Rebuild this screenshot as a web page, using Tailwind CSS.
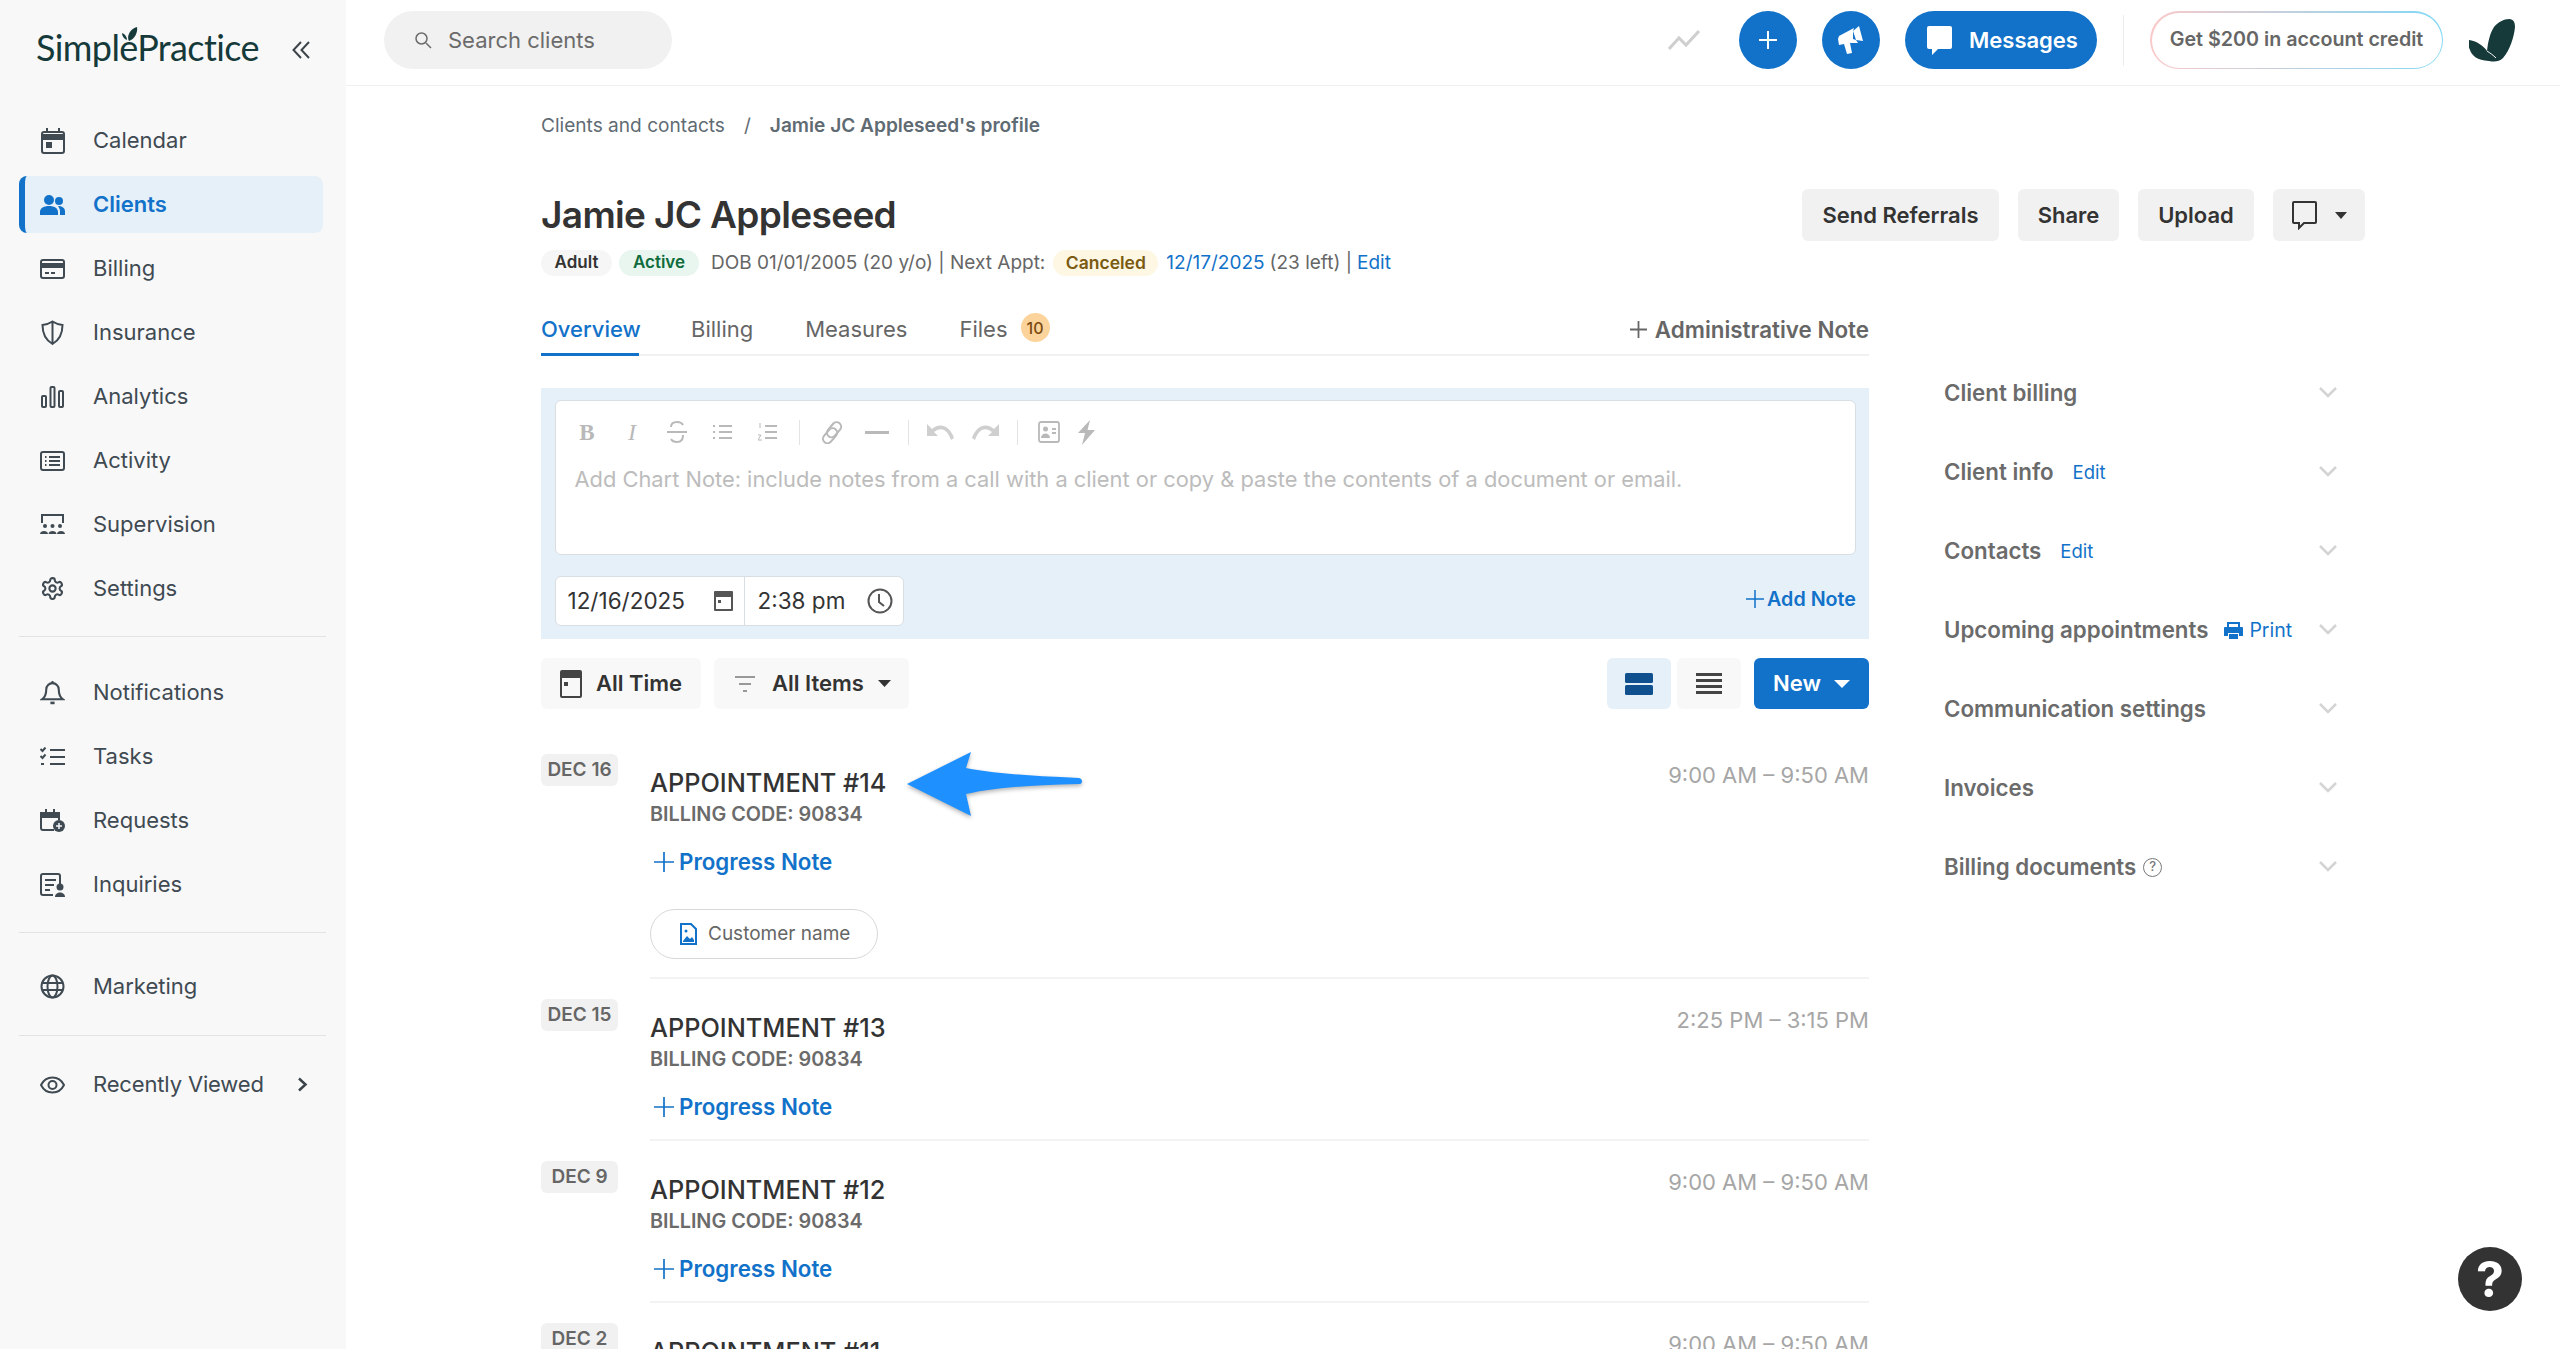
<!DOCTYPE html>
<html lang="en">
<head>
    <meta charset="UTF-8">
    <title>Jamie JC Appleseed's profile</title>
    <script src="https://cdn.jsdelivr.net/npm/@tailwindcss/browser@4"></script>
</head>
<body class="relative h-[1349px] w-[2560px] overflow-hidden bg-white font-['Inter',sans-serif] text-[#333]">
<div class="flex h-full">
    <!-- sidebar -->
    <aside class="w-[346px] shrink-0 bg-[#f8f8f8] text-[22px] text-[#3f4a52]">
        <div class="flex h-[112px] items-start pl-[36px] pt-[24px]">
            <div class="relative w-[222px] whitespace-nowrap font-['Lato',sans-serif] text-[36px] leading-[46px] tracking-[-0.6px] text-[#163a3a]">SimplePractice
                <svg class="absolute left-[85px] top-[3px]" width="17" height="14" viewBox="0 0 17 14"><path d="M8 14C5 9 10 1 16 0c1 5-2 12-8 14zM6 13C3 12 1 9 1 6c3 1 5 4 5 7z" fill="#163a3a"/></svg>
            </div>
            <svg class="ml-[34px] mt-[17px]" width="18" height="18" viewBox="0 0 18 18" fill="none" stroke="#3d4449" stroke-width="2"><path d="M9 1 1.500 9 9 17M17 1 9.500 9 17 17"/></svg>
        </div>
        <nav class="ml-[19px] w-[307px]">
            <a class="mb-[7px] flex h-[57px] w-[304px] items-center gap-[28px] rounded-lg border-l-[6px] border-transparent pl-[15px]">
                <svg width="25" height="26" viewBox="0 0 25 26" fill="none" stroke="#3f4a52" stroke-width="2"><rect x="2" y="4" width="22" height="21" rx="2"/><path d="M2 7h22v4H2z" fill="#3f4a52"/><path d="M7 0v5M19 0v5"/><rect x="6" y="14" width="6" height="6" fill="#3f4a52" stroke="none"/></svg>
                <span>Calendar</span>
            </a>
            <a class="mb-[7px] flex h-[57px] w-[304px] items-center gap-[28px] rounded-lg border-l-[6px] border-[#1272c9] bg-[#e6f0f9] pl-[15px] font-semibold text-[#1272c9]">
                <svg width="25" height="22" viewBox="0 0 25 22" fill="#1272c9"><circle cx="9" cy="6" r="5"/><circle cx="19" cy="7" r="4"/><path d="M0 21v-3c0-4 4-6 9-6s9 2 9 6v3zM20 21v-4c0-2-1-3-2-5 4 0 7 2 7 5v4z"/></svg>
                <span>Clients</span>
            </a>
            <a class="mb-[7px] flex h-[57px] w-[304px] items-center gap-[28px] rounded-lg border-l-[6px] border-transparent pl-[15px]">
                <svg width="25" height="20" viewBox="0 0 25 20" fill="none" stroke="#3f4a52" stroke-width="2"><rect x="1" y="1" width="23" height="18" rx="2"/><path d="M1 5h23v3H1z" fill="#3f4a52"/><path d="M5 14h4M11 14h4"/></svg>
                <span>Billing</span>
            </a>
            <a class="mb-[7px] flex h-[57px] w-[304px] items-center gap-[28px] rounded-lg border-l-[6px] border-transparent pl-[15px]">
                <svg width="25" height="25" viewBox="0 0 25 25" fill="none" stroke="#3f4a52" stroke-width="2"><path d="M12.500 1.500c3 2 6 3 10 3.500 0 9-3 15-10 19C5.500 20 2.500 14 2.500 5c4-.5 7-1.500 10-3.500zM12.500 1.500V24"/></svg>
                <span>Insurance</span>
            </a>
            <a class="mb-[7px] flex h-[57px] w-[304px] items-center gap-[28px] rounded-lg border-l-[6px] border-transparent pl-[15px]">
                <svg width="25" height="24" viewBox="0 0 25 24" fill="none" stroke="#3f4a52" stroke-width="2"><rect x="2" y="11" width="4" height="11" rx="1"/><rect x="10.500" y="2" width="4" height="20" rx="1"/><rect x="19" y="6" width="4" height="16" rx="1"/></svg>
                <span>Analytics</span>
            </a>
            <a class="mb-[7px] flex h-[57px] w-[304px] items-center gap-[28px] rounded-lg border-l-[6px] border-transparent pl-[15px]">
                <svg width="25" height="20" viewBox="0 0 25 20" fill="none" stroke="#3f4a52" stroke-width="2"><rect x="1" y="1" width="23" height="18" rx="2"/><path d="M9 6h11M9 10h11M9 14h11M5 6h1.500M5 10h1.500M5 14h1.500"/></svg>
                <span>Activity</span>
            </a>
            <a class="mb-[7px] flex h-[57px] w-[304px] items-center gap-[28px] rounded-lg border-l-[6px] border-transparent pl-[15px]">
                <svg width="25" height="21" viewBox="0 0 25 21" fill="none" stroke="#3f4a52" stroke-width="2"><path d="M2 9V1h21v8"/><g fill="#3f4a52" stroke="none"><circle cx="5" cy="12" r="2"/><circle cx="12.500" cy="12" r="2"/><circle cx="20" cy="12" r="2"/><path d="M0 20c0-4 8-4 8 0zM8.500 20c0-4 8-4 8 0zM17 20c0-4 8-4 8 0z"/></g></svg>
                <span>Supervision</span>
            </a>
            <a class="flex h-[57px] w-[304px] items-center gap-[28px] rounded-lg border-l-[6px] border-transparent pl-[15px]">
                <svg width="25" height="25" viewBox="0 0 24 24" fill="none" stroke="#3f4a52" stroke-width="2"><path d="M12.220 2h-.44a2 2 0 0 0-2 2v.18a2 2 0 0 1-1 1.730l-.43.25a2 2 0 0 1-2 0l-.15-.08a2 2 0 0 0-2.730.73l-.22.38a2 2 0 0 0 .73 2.730l.15.1a2 2 0 0 1 1 1.720v.51a2 2 0 0 1-1 1.740l-.15.09a2 2 0 0 0-.73 2.730l.22.38a2 2 0 0 0 2.730.73l.15-.08a2 2 0 0 1 2 0l.43.25a2 2 0 0 1 1 1.730V20a2 2 0 0 0 2 2h.44a2 2 0 0 0 2-2v-.18a2 2 0 0 1 1-1.730l.43-.25a2 2 0 0 1 2 0l.15.08a2 2 0 0 0 2.730-.73l.22-.39a2 2 0 0 0-.73-2.730l-.15-.08a2 2 0 0 1-1-1.740v-.5a2 2 0 0 1 1-1.740l.15-.09a2 2 0 0 0 .73-2.730l-.22-.38a2 2 0 0 0-2.730-.73l-.15.08a2 2 0 0 1-2 0l-.43-.25a2 2 0 0 1-1-1.730V4a2 2 0 0 0-2-2z"/><circle cx="12" cy="12" r="3"/></svg>
                <span>Settings</span>
            </a>
            <div class="mb-[27px] mt-[19px] h-px bg-[#e2e2e2]"></div>
            <a class="mb-[7px] flex h-[57px] w-[304px] items-center gap-[28px] rounded-lg border-l-[6px] border-transparent pl-[15px]">
                <svg width="25" height="25" viewBox="0 0 24 24" fill="none" stroke="#3f4a52" stroke-width="2"><path d="M6 9a6 6 0 0 1 12 0c0 6 2 8 4 9.500H2C4 17 6 15 6 9z"/><path d="M10 22h4" stroke-width="2.500"/><path d="M12 1v2"/></svg>
                <span>Notifications</span>
            </a>
            <a class="mb-[7px] flex h-[57px] w-[304px] items-center gap-[28px] rounded-lg border-l-[6px] border-transparent pl-[15px]">
                <svg width="25" height="20" viewBox="0 0 25 20" fill="none" stroke="#3f4a52" stroke-width="2"><path d="M10 3h15M10 10h15M10 17h15M0.500 2l2 2 3-3.500M0.500 9l2 2 3-3.500M1 17h3"/></svg>
                <span>Tasks</span>
            </a>
            <a class="mb-[7px] flex h-[57px] w-[304px] items-center gap-[28px] rounded-lg border-l-[6px] border-transparent pl-[15px]">
                <svg width="25" height="24" viewBox="0 0 25 24" fill="none" stroke="#3f4a52" stroke-width="2"><path d="M14 21H3a2 2 0 0 1-2-2V6h18v5"/><path d="M1 4h18v4H1z" fill="#3f4a52"/><path d="M6 0v4M14 0v4"/><circle cx="19" cy="17" r="6" fill="#3f4a52" stroke="none"/><path d="M19 14v6M16 17h6" stroke="#f8f8f8" stroke-width="1.500"/></svg>
                <span>Requests</span>
            </a>
            <a class="flex h-[57px] w-[304px] items-center gap-[28px] rounded-lg border-l-[6px] border-transparent pl-[15px]">
                <svg width="25" height="24" viewBox="0 0 25 24" fill="none" stroke="#3f4a52" stroke-width="2"><path d="M13 22H3a2 2 0 0 1-2-2V3a2 2 0 0 1 2-2h15a2 2 0 0 1 2 2v8"/><path d="M5 7h11M5 12h9M5 17h5"/><g fill="#3f4a52" stroke="none"><circle cx="20" cy="14" r="3.500"/><path d="M15 24c0-6 10-6 10 0z"/></g></svg>
                <span>Inquiries</span>
            </a>
            <div class="mb-[25px] mt-[19px] h-px bg-[#e2e2e2]"></div>
            <a class="flex h-[57px] w-[304px] items-center gap-[28px] rounded-lg border-l-[6px] border-transparent pl-[15px]">
                <svg width="25" height="25" viewBox="0 0 25 25" fill="none" stroke="#3f4a52" stroke-width="2"><circle cx="12.500" cy="12.500" r="11"/><ellipse cx="12.500" cy="12.500" rx="5" ry="11"/><path d="M2 9h21M2 16h21"/></svg>
                <span>Marketing</span>
            </a>
            <div class="mb-[20px] mt-[20px] h-px bg-[#e2e2e2]"></div>
            <a class="flex h-[57px] w-[304px] items-center gap-[28px] rounded-lg border-l-[6px] border-transparent pl-[15px]">
                <svg width="25" height="18" viewBox="0 0 25 18" fill="none" stroke="#3f4a52" stroke-width="2"><path d="M1 9c5-10 18-10 23 0-5 10-18 10-23 0z"/><circle cx="12.500" cy="9" r="4"/></svg>
                <span class="tracking-[-0.15px]">Recently Viewed</span>
                <svg class="ml-[5px]" width="11" height="15" viewBox="0 0 11 15" fill="none" stroke="#3d4449" stroke-width="2.500"><path d="M2 1.500 8.500 7.500 2 13.500"/></svg>
            </a>
        </nav>
    </aside>

    <main class="min-w-0 flex-1">
        <!-- top bar -->
        <header class="flex h-[86px] items-center border-b border-[#f0f0f0] pb-[5px] pl-[38px] pr-[45px]">
            <div class="flex h-[58px] w-[288px] items-center gap-[16px] rounded-full bg-[#f1f1f1] pl-[30px] text-[22px] text-[#6b6b6b]">
                <svg width="18" height="18" viewBox="0 0 18 18" fill="none" stroke="#6b6b6b" stroke-width="1.500"><circle cx="7.500" cy="7.500" r="5.500"/><path d="m12 12 5 5"/></svg>
                <span>Search clients</span>
            </div>
            <svg class="ml-auto mr-[39px]" width="32" height="21" viewBox="0 0 32 21" fill="none" stroke="#cfcfcf" stroke-width="3"><path d="M1 19 11 8l7 7L31 1"/></svg>
            <div class="flex h-[58px] w-[58px] items-center justify-center rounded-full bg-[#1272c9]">
                <svg width="20" height="20" viewBox="0 0 20 20" stroke="#fff" stroke-width="2"><path d="M10 1v18M1 10h18"/></svg>
            </div>
            <div class="ml-[25px] flex h-[58px] w-[58px] items-center justify-center rounded-full bg-[#1272c9]">
                <svg width="28" height="30" viewBox="0 0 28 30" fill="#fff"><path d="M2 11 17 3l-1 3 6-5 4 15-7-1 2 3-8 0 2 10-5 1-3-10-5 1-1-6z"/><path d="M16 6l3 9-3-1z" fill="#1272c9"/></svg>
            </div>
            <div class="ml-[25px] flex h-[58px] w-[192px] items-center gap-[16px] rounded-full bg-[#1272c9] pl-[21px] text-[22px] font-semibold text-white">
                <svg width="27" height="30" viewBox="0 0 27 30" fill="#fff"><path d="M3 1h21a2 2 0 0 1 2 2v19a2 2 0 0 1-2 2H12l-6 6v-6H3a2 2 0 0 1-2-2V3a2 2 0 0 1 2-2z"/></svg>
                <span>Messages</span>
            </div>
            <div class="ml-[26px] mr-[26px] h-[51px] w-px bg-[#ececec]"></div>
            <div class="h-[58px] w-[293px] rounded-full bg-[linear-gradient(90deg,#fbc9c9,#80d8f5)] p-[1.5px]">
                <div class="flex h-full items-center justify-center rounded-full bg-white text-[19.700px] font-semibold text-[#666]">Get $200 in account credit</div>
            </div>
            <svg class="ml-[26px]" width="46" height="43" viewBox="0 0 46 43"><path d="M0 21c7 1 14 5 18 11 1-9 3-18 7-24 4-5 10-8 15-8 5 0 6 4 6 8-1 10-5 23-12 31-4 4-9 4-14 3C8 41 3 37 1 31-1 27-1 24 0 21z" fill="#163a3a"/><path d="M18 32c3 2 6 4 9 7" stroke="#fff" stroke-width="1" fill="none"/></svg>
        </header>

        <div class="pl-[195px] pr-[195px]">
            <div class="flex h-[78px] items-center text-[19.100px] text-[#5f6b73]">
                <span>Clients and contacts</span>
                <span class="mx-[19px]">/</span>
                <span class="font-semibold">Jamie JC Appleseed's profile</span>
            </div>
            <div class="mt-[25px] flex h-[52px] items-center justify-between">
                <h1 class="text-[37px] font-semibold tracking-[-0.65px] text-[#333]">Jamie JC Appleseed</h1>
                <div class="flex gap-[19px] text-[22px] font-semibold text-[#333]">
                    <button class="h-[52px] w-[197px] rounded-md bg-[#f1f1f1]">Send Referrals</button>
                    <button class="h-[52px] w-[101px] rounded-md bg-[#f1f1f1]">Share</button>
                    <button class="h-[52px] w-[116px] rounded-md bg-[#f1f1f1]">Upload</button>
                    <button class="flex h-[52px] w-[92px] items-center justify-center gap-[17px] rounded-md bg-[#f1f1f1]">
                        <svg width="27" height="30" viewBox="0 0 27 30" fill="none" stroke="#333" stroke-width="2"><path d="M3 2h21a1 1 0 0 1 1 1v19a1 1 0 0 1-1 1H13l-5 5v-5H3a1 1 0 0 1-1-1V3a1 1 0 0 1 1-1z"/></svg>
                        <svg width="12" height="7" viewBox="0 0 12 7" fill="#333"><path d="M0 0h12L6 7z"/></svg>
                    </button>
                </div>
            </div>
            <div class="mt-[9px] flex h-[26px] items-center text-[19px] whitespace-nowrap text-[#666]">
                <span class="flex h-[26px] w-[71px] items-center justify-center rounded-full bg-[#f6f6f6] text-[17px] font-semibold text-[#333]">Adult</span>
                <span class="ml-[7px] flex h-[26px] w-[80px] items-center justify-center rounded-full bg-[#e8f6ef] text-[17px] font-semibold text-[#0f6b3c]">Active</span>
                <span class="ml-[12px]">DOB 01/01/2005 (20 y/o) | Next Appt:</span>
                <span class="ml-[8px] flex h-[26px] w-[105px] items-center justify-center rounded-full bg-[#fdf7e3] text-[17.500px] font-semibold text-[#7a5a10]">Canceled</span>
                <span class="ml-[8px] text-[#1272c9]">12/17/2025</span>
                <span class="ml-[5px]">(23 left) |</span>
                <span class="ml-[5px] text-[#1272c9]">Edit</span>
            </div>

            <div class="flex">
                <!-- left column -->
                <div class="w-[1328px] shrink-0">
                    <div class="mt-[37px] flex h-[43px] items-start justify-between border-b-2 border-[#f1f1f1] text-[22px] text-[#666]">
                        <div class="flex">
                            <span class="h-[43px] w-[98px] border-b-[3px] border-[#1272c9] font-medium text-[#1272c9]">Overview</span>
                            <span class="ml-[52px]">Billing</span>
                            <span class="ml-[52px]">Measures</span>
                            <span class="ml-[52px]">Files</span>
                            <span class="ml-[13px] flex h-[29px] w-[29px] items-center justify-center rounded-full bg-[#fcd49b] text-[16px] font-medium text-[#7a4a10]">10</span>
                        </div>
                        <div class="flex items-center gap-[7px] text-[22.400px] font-semibold">
                            <svg width="19" height="19" viewBox="0 0 19 19" stroke="#666" stroke-width="1.800"><path d="M9.500 1v17M1 9.500h17"/></svg>
                            <span>Administrative Note</span>
                        </div>
                    </div>

                    <!-- chart note box -->
                    <div class="mt-[32px] h-[251px] bg-[#e6f0f8] pl-[13.500px] pr-[13px] pt-[12px]">
                        <div class="h-[155px] rounded-md border border-[#d9dee3] bg-white">
                            <div class="flex h-[62px] items-center pl-[9px]">
                                <span class="flex w-[45px] justify-center font-['Liberation_Serif',serif] text-[23px] font-bold leading-none text-[#b9b9b9]">B</span>
                                <span class="flex w-[45px] justify-center font-['Liberation_Serif',serif] text-[24px] italic leading-none text-[#b9b9b9]">I</span>
                                <span class="flex w-[45px] justify-center"><svg width="20" height="24" viewBox="0 0 20 24" fill="none" stroke="#b9b9b9" stroke-width="2"><path d="M16 5c-1-2-3-3-6-3-4 0-6 2-6 5M0 12h20M16 15c0 4-2 7-6 7-3 0-5-1-6-3"/></svg></span>
                                <span class="flex w-[45px] justify-center"><svg width="19" height="18" viewBox="0 0 19 18" fill="none" stroke="#b9b9b9" stroke-width="2"><path d="M6 3h13M6 9h13M6 15h13M0 3h2M0 9h2M0 15h2"/></svg></span>
                                <span class="flex w-[45px] justify-center"><svg width="19" height="20" viewBox="0 0 19 20" fill="none" stroke="#b9b9b9" stroke-width="2"><path d="M7 4h12M7 10h12M7 16h12"/><path d="M2 1v5M0 13h3l-3 5h4" stroke-width="1"/></svg></span>
                                <span class="flex w-[20px] justify-center"><span class="h-[25px] w-px bg-[#e3e3e3]"></span></span>
                                <span class="flex w-[45px] justify-center"><svg width="23" height="23" viewBox="0 0 23 23" fill="none" stroke="#b9b9b9" stroke-width="2"><rect x="9" y="0" width="9" height="17" rx="4.500" transform="rotate(40 13 8)"/><rect x="5" y="6" width="9" height="17" rx="4.500" transform="rotate(40 9 14)"/></svg></span>
                                <span class="flex w-[45px] justify-center"><span class="h-[3px] w-[24px] bg-[#b9b9b9]"></span></span>
                                <span class="flex w-[18px] justify-center"><span class="h-[25px] w-px bg-[#e3e3e3]"></span></span>
                                <span class="flex w-[45px] justify-center"><svg width="27" height="16" viewBox="0 0 27 16" fill="#cfcfcf"><path d="M0 0v12h11l-4-4c6-5 13-4 17 8l3-2C23 2 13-2 5 5z"/></svg></span>
                                <span class="flex w-[45px] justify-center"><svg width="27" height="16" viewBox="0 0 27 16" fill="#cfcfcf"><path d="M27 0v12H16l4-4C14 3 7 4 3 16l-3-2C4 2 14-2 22 5z"/></svg></span>
                                <span class="flex w-[19px] justify-center"><span class="h-[25px] w-px bg-[#e3e3e3]"></span></span>
                                <span class="flex w-[44px] justify-center"><svg width="22" height="24" viewBox="0 0 22 24" fill="none" stroke="#b9b9b9" stroke-width="1.800"><rect x="1" y="2" width="20" height="20" rx="2"/><g fill="#b9b9b9" stroke="none"><circle cx="7.500" cy="9" r="2.500"/><path d="M3 18c0-6 9-6 9 0z"/></g><path d="M14 9h4M14 13h4"/></svg></span>
                                <span class="flex w-[31px] justify-center"><svg width="17" height="25" viewBox="0 0 17 25" fill="#b9b9b9"><path d="M12 0 0 13h7l-3 12 13-15H9.500z"/></svg></span>
                            </div>
                            <div class="pl-[19px] pt-[1px] text-[21.850px] leading-[30px] whitespace-nowrap text-[#bcbcbc]">Add Chart Note: include notes from a call with a client or copy &amp; paste the contents of a document or email.</div>
                        </div>
                        <div class="mt-[21px] flex items-center justify-between">
                            <div class="flex h-[50px] w-[349px] rounded-md border border-[#d9dee3] bg-white text-[22.500px] text-[#333]">
                                <div class="flex w-[189px] items-center justify-between border-r border-[#d9dee3] pl-[12px] pr-[11px]">
                                    <span>12/16/2025</span>
                                    <svg width="19" height="20" viewBox="0 0 19 20" fill="#555"><path d="M1 0h17a1 1 0 0 1 1 1v18a1 1 0 0 1-1 1H1a1 1 0 0 1-1-1V1a1 1 0 0 1 1-1zm1 6v12h15V6z"/><rect x="4" y="9" width="3" height="3"/></svg>
                                </div>
                                <div class="flex flex-1 items-center justify-between pl-[13px] pr-[10px]">
                                    <span>2:38 pm</span>
                                    <svg width="26" height="26" viewBox="0 0 26 26" fill="none" stroke="#555" stroke-width="2"><circle cx="13" cy="13" r="11.500"/><path d="M12 6v8l5 4"/></svg>
                                </div>
                            </div>
                            <div class="-mt-[3px] flex items-center gap-[3px] text-[19.700px] font-semibold text-[#1272c9]">
                                <svg width="18" height="18" viewBox="0 0 18 18" stroke="#1272c9" stroke-width="1.500"><path d="M9 0v18M0 9h18"/></svg>
                                <span>Add Note</span>
                            </div>
                        </div>
                    </div>

                    <!-- filters -->
                    <div class="mt-[19px] flex h-[51px] items-center text-[22px] font-semibold text-[#333]">
                        <div class="flex h-[51px] w-[160px] items-center justify-center gap-[14px] rounded-md bg-[#f8f8f8]">
                            <svg width="22" height="29" viewBox="0 0 22 29" fill="#444"><path d="M2 1h18a2 2 0 0 1 2 2v24a2 2 0 0 1-2 2H2a2 2 0 0 1-2-2V3a2 2 0 0 1 2-2zm0 8v18h18V9z"/><rect x="4" y="13" width="4" height="4"/></svg>
                            <span>All Time</span>
                        </div>
                        <div class="ml-[13px] flex h-[51px] w-[195px] items-center gap-[17px] rounded-md bg-[#f8f8f8] pl-[21px]">
                            <svg width="20" height="18" viewBox="0 0 20 18" fill="none" stroke="#999" stroke-width="2"><path d="M0 2h20M4 9h12M8 16h4"/></svg>
                            <span>All Items</span>
                            <svg class="-ml-[3px]" width="13" height="7" viewBox="0 0 13 7" fill="#333"><path d="M0 0h13L6.500 7z"/></svg>
                        </div>
                        <div class="ml-auto flex h-[51px] w-[64px] items-center justify-center rounded-md bg-[#e6f0f8]">
                            <svg width="28" height="22" viewBox="0 0 28 22" fill="#10508f"><rect width="28" height="10" rx="1.500"/><rect y="12" width="28" height="10" rx="1.500"/></svg>
                        </div>
                        <div class="ml-[6px] flex h-[51px] w-[64px] items-center justify-center rounded-md bg-[#f8f8f8]">
                            <svg width="26" height="21" viewBox="0 0 26 21" fill="#444"><rect width="26" height="3"/><rect y="6" width="26" height="3"/><rect y="12" width="26" height="3"/><rect y="18" width="26" height="3"/></svg>
                        </div>
                        <div class="ml-[13px] flex h-[51px] w-[115px] items-center justify-center gap-[13px] rounded-md bg-[#1272c9] text-white">
                            <span>New</span>
                            <svg width="16" height="8" viewBox="0 0 16 8" fill="#fff"><path d="M0 0h16L8 8z"/></svg>
                        </div>
                    </div>

                    <!-- appointments -->
                    <div class="mt-[45px] flex h-[225px]">
                        <span class="flex h-[32px] w-[77px] items-center justify-center rounded-md bg-[#f1f1f1] text-[19px] font-semibold text-[#666]">DEC 16</span>
                        <div class="ml-[32px] flex-1 border-b-2 border-[#f3f3f3]">
                            <div class="flex items-start justify-between">
                                <div class="pt-[13px]">
                                    <div class="text-[25.300px] font-medium leading-[32px] text-[#333]">APPOINTMENT #14</div>
                                    <div class="text-[19.800px] font-semibold leading-[30px] text-[#6b6b6b]">BILLING CODE: 90834</div>
                                </div>
                                <span class="text-[22px] leading-[42px] text-[#a6a6a6]">9:00 AM – 9:50 AM</span>
                            </div>
                            <div class="mt-[18px] flex items-center gap-[5px] pl-[4px] text-[22.300px] font-semibold leading-[30px] text-[#1272c9]">
                                <svg width="20" height="20" viewBox="0 0 20 20" stroke="#1272c9" stroke-width="1.700"><path d="M10 0v20M0 10h20"/></svg>
                                <span>Progress Note</span>
                            </div>
                            <div class="mt-[32px] flex h-[50px] w-[228px] items-center gap-[11px] rounded-full border border-[#d8d8d8] pl-[29px] text-[19px] text-[#666]">
                                <svg width="17" height="22" viewBox="0 0 17 22" fill="none" stroke="#1272c9" stroke-width="2"><path d="M1 1h10l5 5v15H1z"/><circle cx="6" cy="8" r="1.500" fill="#1272c9" stroke="none"/><path d="M3 18l4-5 3 3 2-2 2 3v2H3z" fill="#1272c9" stroke="none"/></svg>
                                <span>Customer name</span>
                            </div>
                        </div>
                    </div>
                    <div class="mt-[20px] flex h-[142px]">
                        <span class="flex h-[32px] w-[77px] items-center justify-center rounded-md bg-[#f1f1f1] text-[19px] font-semibold text-[#666]">DEC 15</span>
                        <div class="ml-[32px] flex-1 border-b-2 border-[#f3f3f3]">
                            <div class="flex items-start justify-between">
                                <div class="pt-[13px]">
                                    <div class="text-[25.300px] font-medium leading-[32px] text-[#333]">APPOINTMENT #13</div>
                                    <div class="text-[19.800px] font-semibold leading-[30px] text-[#6b6b6b]">BILLING CODE: 90834</div>
                                </div>
                                <span class="text-[22px] leading-[42px] text-[#a6a6a6]">2:25 PM – 3:15 PM</span>
                            </div>
                            <div class="mt-[18px] flex items-center gap-[5px] pl-[4px] text-[22.300px] font-semibold leading-[30px] text-[#1272c9]">
                                <svg width="20" height="20" viewBox="0 0 20 20" stroke="#1272c9" stroke-width="1.700"><path d="M10 0v20M0 10h20"/></svg>
                                <span>Progress Note</span>
                            </div>
                        </div>
                    </div>
                    <div class="mt-[20px] flex h-[142px]">
                        <span class="flex h-[32px] w-[77px] items-center justify-center rounded-md bg-[#f1f1f1] text-[19px] font-semibold text-[#666]">DEC 9</span>
                        <div class="ml-[32px] flex-1 border-b-2 border-[#f3f3f3]">
                            <div class="flex items-start justify-between">
                                <div class="pt-[13px]">
                                    <div class="text-[25.300px] font-medium leading-[32px] text-[#333]">APPOINTMENT #12</div>
                                    <div class="text-[19.800px] font-semibold leading-[30px] text-[#6b6b6b]">BILLING CODE: 90834</div>
                                </div>
                                <span class="text-[22px] leading-[42px] text-[#a6a6a6]">9:00 AM – 9:50 AM</span>
                            </div>
                            <div class="mt-[18px] flex items-center gap-[5px] pl-[4px] text-[22.300px] font-semibold leading-[30px] text-[#1272c9]">
                                <svg width="20" height="20" viewBox="0 0 20 20" stroke="#1272c9" stroke-width="1.700"><path d="M10 0v20M0 10h20"/></svg>
                                <span>Progress Note</span>
                            </div>
                        </div>
                    </div>
                    <div class="mt-[20px] flex h-[26px]">
                        <span class="flex h-[26px] w-[77px] items-start justify-center rounded-t-md bg-[#f1f1f1] pt-[2px] text-[19px] font-semibold text-[#666]">DEC 2</span>
                        <div class="ml-[32px] flex-1 overflow-hidden">
                            <div class="flex items-start justify-between">
                                <div class="pt-[13px] text-[25.300px] font-medium leading-[32px] text-[#333]">APPOINTMENT #11</div>
                                <span class="text-[22px] leading-[42px] text-[#a6a6a6]">9:00 AM – 9:50 AM</span>
                            </div>
                        </div>
                    </div>
                </div>

                <!-- right column -->
                <div class="ml-[75px] mt-[77px] w-[393px] text-[22.300px] font-semibold text-[#6b6b6b]">
                    <div class="flex h-[79px] items-center justify-between">
                        <span>Client billing</span>
                        <svg width="18" height="11" viewBox="0 0 18 11" fill="none" stroke="#d4d4d4" stroke-width="2.500"><path d="m1 1 8 8 8-8"/></svg>
                    </div>
                    <div class="flex h-[79px] items-center">
                        <span>Client info</span>
                        <span class="ml-[19px] mt-[2px] text-[18.500px] font-normal text-[#1272c9]">Edit</span>
                        <svg class="ml-auto" width="18" height="11" viewBox="0 0 18 11" fill="none" stroke="#d4d4d4" stroke-width="2.500"><path d="m1 1 8 8 8-8"/></svg>
                    </div>
                    <div class="flex h-[79px] items-center">
                        <span>Contacts</span>
                        <span class="ml-[19px] mt-[2px] text-[18.500px] font-normal text-[#1272c9]">Edit</span>
                        <svg class="ml-auto" width="18" height="11" viewBox="0 0 18 11" fill="none" stroke="#d4d4d4" stroke-width="2.500"><path d="m1 1 8 8 8-8"/></svg>
                    </div>
                    <div class="flex h-[79px] items-center">
                        <span>Upcoming appointments</span>
                        <svg class="ml-[16px] mt-[1px]" width="19" height="19" viewBox="0 0 19 19" fill="#1272c9"><path d="M3 7V1h13v6h-2V3H5v4z"/><path d="M1 6h17a1 1 0 0 1 1 1v8h-4v-3H4v3H0V7a1 1 0 0 1 1-1z"/><rect x="5" y="13" width="9" height="5"/></svg>
                        <span class="ml-[6px] mt-[2px] text-[19.500px] font-normal text-[#1272c9]">Print</span>
                        <svg class="ml-auto" width="18" height="11" viewBox="0 0 18 11" fill="none" stroke="#d4d4d4" stroke-width="2.500"><path d="m1 1 8 8 8-8"/></svg>
                    </div>
                    <div class="flex h-[79px] items-center justify-between">
                        <span>Communication settings</span>
                        <svg width="18" height="11" viewBox="0 0 18 11" fill="none" stroke="#d4d4d4" stroke-width="2.500"><path d="m1 1 8 8 8-8"/></svg>
                    </div>
                    <div class="flex h-[79px] items-center justify-between">
                        <span>Invoices</span>
                        <svg width="18" height="11" viewBox="0 0 18 11" fill="none" stroke="#d4d4d4" stroke-width="2.500"><path d="m1 1 8 8 8-8"/></svg>
                    </div>
                    <div class="flex h-[79px] items-center">
                        <span>Billing documents</span>
                        <span class="ml-[7px] mt-[1px] flex h-[19px] w-[19px] items-center justify-center rounded-full border border-[#777] text-[13px] font-medium text-[#777]">?</span>
                        <svg class="ml-auto" width="18" height="11" viewBox="0 0 18 11" fill="none" stroke="#d4d4d4" stroke-width="2.500"><path d="m1 1 8 8 8-8"/></svg>
                    </div>
                </div>
            </div>
        </div>
    </main>
</div>

<!-- annotation arrow drawn over the screenshot -->
<svg class="absolute left-[900px] top-[746px] drop-shadow-[0_2px_2px_rgba(0,0,0,0.3)]" width="190" height="76" viewBox="0 0 190 76"><path d="M7 38 71 6 66 22c30 6 70 8 113 10 4 1 4 6 0 6-43 1-83 3-113 10l5 22z" fill="#1e90ff"/></svg>

<div class="absolute left-[2458px] top-[1247px] flex h-[64px] w-[64px] items-center justify-center rounded-full bg-[#333] text-[50px] font-bold text-white">?</div>
</body>
</html>
